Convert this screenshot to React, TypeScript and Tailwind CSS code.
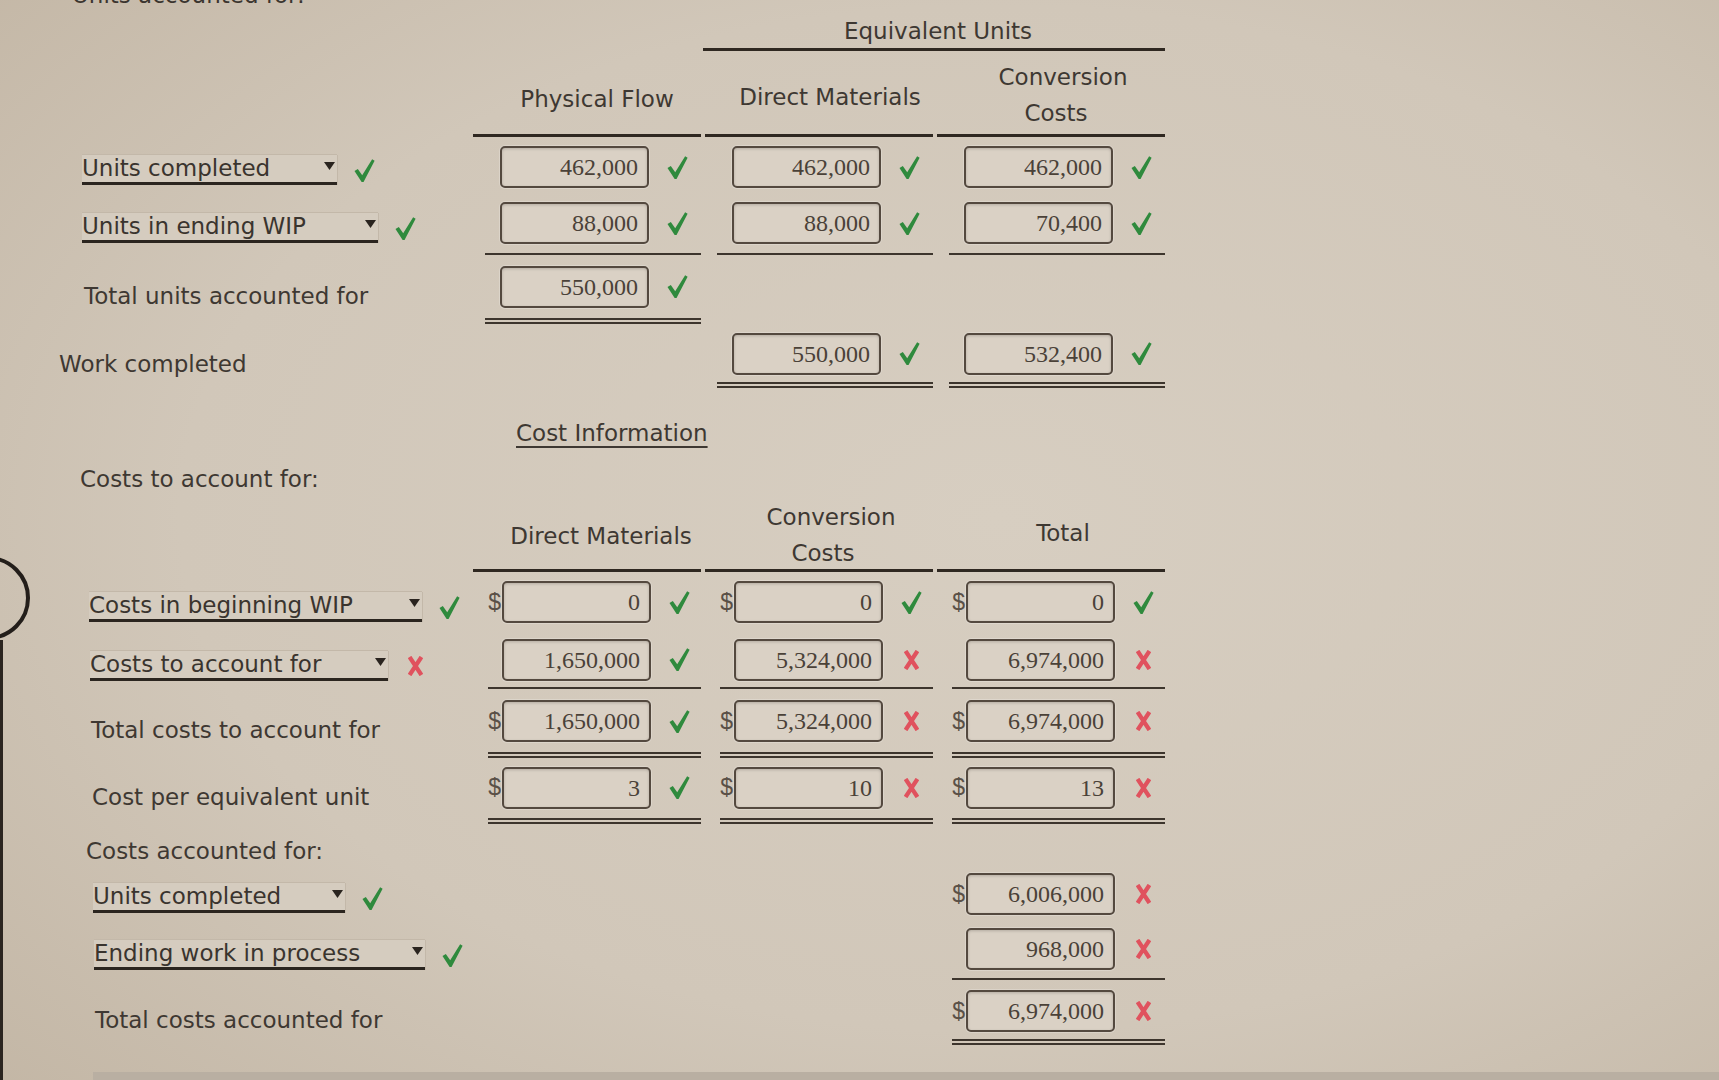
import React from 'react';

type Mark = 'c' | 'x';
type Cell = null | { v: string; d?: boolean; m: Mark };

const GRID = 'grid grid-cols-[469px_228px_228px_228px] gap-x-[4px]';

function Check() {
  return (
    <svg width="22" height="25" viewBox="0 0 22 25">
      <path d="M0.5 13 L4 11 L8.6 17.6 L19 0.6 L21.6 2.2 L10 24.6 L8 24.6 Z" fill="#2f8a3d" />
    </svg>
  );
}

function Cross() {
  return (
    <svg width="15" height="20" viewBox="0 0 15 20">
      <path d="M1.6 1 L13.4 19 M13.4 1 L1.6 19" stroke="#e0525e" strokeWidth="4.2" />
    </svg>
  );
}

function MarkView({ m }: { m: Mark }) {
  return <div className="flex w-[21px] justify-center">{m === 'c' ? <Check /> : <Cross />}</div>;
}

function CellView({ c, bottom }: { c: Cell; bottom?: boolean }) {
  if (!c) return <div />;
  return (
    <div className="flex items-center">
      <div
        className={
          (bottom ? 'w-[29px]' : 'w-[27px]') +
          " pr-[1px] text-right font-['Liberation_Sans',sans-serif] text-[23px] text-[#5a5047]"
        }
      >
        {c.d ? '$' : ''}
      </div>
      <div className="flex h-[42px] w-[149px] items-center justify-end rounded-[5px] border-2 border-[#54493f] bg-[#dad1c5] pr-[9px] font-['Liberation_Serif',serif] text-[24px] leading-none text-[#4a4138] shadow-[inset_0_1px_3px_rgba(0,0,0,0.18),0_0_0_1px_rgba(255,255,255,0.22)]">
        {c.v}
      </div>
      <div className="ml-[18px]">
        <MarkView m={c.m} />
      </div>
    </div>
  );
}

function DD({ text, w, m }: { text: string; w: string; m: Mark }) {
  return (
    <div className="flex items-center">
      <div
        className={
          w +
          ' flex h-[30px] items-center justify-between border-b-[3px] border-[#2b251f] bg-[#d5ccbf] shadow-[0_-1px_0_#c3b8a9,1px_0_0_#c3b8a9]'
        }
      >
        <span className="whitespace-nowrap leading-[27px] text-[#3a342e]">{text}</span>
        <svg width="11" height="8" viewBox="0 0 11 8" className="mb-[6px] mr-[2px]">
          <path d="M0 0 H11 L5.5 8 Z" fill="#2a241f" />
        </svg>
      </div>
      <div className="ml-[17px]">
        <MarkView m={m} />
      </div>
    </div>
  );
}

function Row({
  mt,
  label,
  cells,
  bottom,
}: {
  mt: string;
  label: React.ReactNode;
  cells: Cell[];
  bottom?: boolean;
}) {
  return (
    <div className={GRID + ' h-[42px] ' + mt}>
      {label}
      {cells.map((c, i) => (
        <CellView key={i} c={c} bottom={bottom} />
      ))}
    </div>
  );
}

type LineT = null | 's' | 'd' | 't';

function Lines({ mt, types, bottom }: { mt: string; types: LineT[]; bottom?: boolean }) {
  const ml = bottom ? 'ml-[15px]' : 'ml-[12px]';
  return (
    <div className={GRID + ' ' + mt}>
      <div />
      {types.map((t, i) => {
        if (!t) return <div key={i} />;
        if (t === 't') return <div key={i} className="h-[3px] bg-[#2f2821]" />;
        if (t === 's') return <div key={i} className={ml + ' h-[2px] bg-[#3d352d]'} />;
        return <div key={i} className={ml + ' h-[6px] border-y-2 border-[#3d352d]'} />;
      })}
    </div>
  );
}

export default function App() {
  return (
    <div className="relative h-[1080px] w-[1719px] overflow-hidden bg-[#cfc5b6] bg-[radial-gradient(ellipse_95%_95%_at_58%_48%,#d7cec1_0%,#d1c7b9_50%,#bcae9b_100%)] font-['DejaVu_Sans',sans-serif] text-[23px] text-[#3e3832]">
      {/* photo artefacts */}
      <div className="absolute left-[-54px] top-[556px] h-[84px] w-[84px] rounded-full border-[4px] border-[#231e1a]" />
      <div className="absolute bottom-0 left-0 top-[640px] w-[3px] bg-[#2b2520]" />

      <div className="mt-[-18px] h-[26px] pl-[72px] leading-[26px] text-[#3b352f]">Units accounted for:</div>

      {/* Equivalent units heading */}
      <div className={GRID + ' mt-[10px]'}>
        <div className="col-span-2 col-start-3 flex flex-col">
          <div className="h-[26px] pl-[6px] text-center leading-[26px]">Equivalent Units</div>
          <div className="-ml-[2px] mt-[4px] h-[3px] bg-[#2f2821]" />
        </div>
      </div>

      <div className={GRID + ' h-[83px]'}>
        <div />
        <div className="whitespace-nowrap pl-[20px] pt-[35px] text-center leading-[26px]">Physical Flow</div>
        <div className="whitespace-nowrap pl-[22px] pt-[33px] text-center leading-[26px]">Direct Materials</div>
        <div className="pl-[24px] pt-[8px] text-center leading-[36px]">
          Conversion
          <br />
          <span className="pr-[14px]">Costs</span>
        </div>
      </div>
      <Lines mt="" types={['t', 't', 't']} />

      <Row
        mt="mt-[9px]"
        label={
          <div className="pl-[82px] pt-[9px]">
            <DD text="Units completed" w="w-[255px]" m="c" />
          </div>
        }
        cells={[
          { v: '462,000', m: 'c' },
          { v: '462,000', m: 'c' },
          { v: '462,000', m: 'c' },
        ]}
      />
      <Row
        mt="mt-[14px]"
        label={
          <div className="pl-[82px] pt-[11px]">
            <DD text="Units in ending WIP" w="w-[296px]" m="c" />
          </div>
        }
        cells={[
          { v: '88,000', m: 'c' },
          { v: '88,000', m: 'c' },
          { v: '70,400', m: 'c' },
        ]}
      />
      <Lines mt="mt-[9px]" types={['s', 's', 's']} />
      <Row
        mt="mt-[9px]"
        label={<div className="whitespace-nowrap pl-[84px] pt-[19px] leading-[26px]">Total units accounted for</div>}
        cells={[{ v: '550,000', m: 'c' }, null, null]}
      />
      <Lines mt="mt-[12px]" types={['d', null, null]} />
      <Row
        mt="mt-[6px]"
        label={<div className="whitespace-nowrap pl-[59px] pt-[21px] leading-[26px]">Work completed</div>}
        cells={[null, { v: '550,000', m: 'c' }, { v: '532,400', m: 'c' }]}
      />
      <Lines mt="mt-[10px]" types={[null, 'd', 'd']} />

      {/* Cost information */}
      <div className={GRID + ' mt-[32px] h-[26px]'}>
        <div />
        <div className="whitespace-nowrap pl-[43px] leading-[26px] underline decoration-[2px] underline-offset-[5px]">
          Cost Information
        </div>
      </div>
      <div className="mt-[20px] h-[26px] pl-[80px] leading-[26px]">Costs to account for:</div>

      <div className={GRID + ' h-[77px]'}>
        <div />
        <div className="whitespace-nowrap pl-[28px] pt-[31px] text-center leading-[26px]">Direct Materials</div>
        <div className="pl-[24px] pt-[7px] text-center leading-[36px]">
          Conversion
          <br />
          <span className="pr-[16px]">Costs</span>
        </div>
        <div className="pl-[24px] pt-[28px] text-center leading-[26px]">Total</div>
      </div>
      <Lines mt="" types={['t', 't', 't']} />

      <Row
        bottom
        mt="mt-[9px]"
        label={
          <div className="pl-[89px] pt-[11px]">
            <DD text="Costs in beginning WIP" w="w-[333px]" m="c" />
          </div>
        }
        cells={[
          { v: '0', d: true, m: 'c' },
          { v: '0', d: true, m: 'c' },
          { v: '0', d: true, m: 'c' },
        ]}
      />
      <Row
        bottom
        mt="mt-[15px]"
        label={
          <div className="pl-[90px] pt-[13px]">
            <DD text="Costs to account for" w="w-[298px]" m="x" />
          </div>
        }
        cells={[
          { v: '1,650,000', m: 'c' },
          { v: '5,324,000', m: 'x' },
          { v: '6,974,000', m: 'x' },
        ]}
      />
      <Lines bottom mt="mt-[7px]" types={['s', 's', 's']} />
      <Row
        bottom
        mt="mt-[10px]"
        label={<div className="whitespace-nowrap pl-[91px] pt-[18px] leading-[26px]">Total costs to account for</div>}
        cells={[
          { v: '1,650,000', d: true, m: 'c' },
          { v: '5,324,000', d: true, m: 'x' },
          { v: '6,974,000', d: true, m: 'x' },
        ]}
      />
      <Lines bottom mt="mt-[11px]" types={['d', 'd', 'd']} />
      <Row
        bottom
        mt="mt-[7px]"
        label={<div className="whitespace-nowrap pl-[92px] pt-[19px] leading-[26px]">Cost per equivalent unit</div>}
        cells={[
          { v: '3', d: true, m: 'c' },
          { v: '10', d: true, m: 'x' },
          { v: '13', d: true, m: 'x' },
        ]}
      />
      <Lines bottom mt="mt-[11px]" types={['d', 'd', 'd']} />

      <div className="mt-[14px] h-[26px] pl-[86px] leading-[26px]">Costs accounted for:</div>

      <Row
        bottom
        mt="mt-[9px]"
        label={
          <div className="pl-[93px] pt-[10px]">
            <DD text="Units completed" w="w-[252px]" m="c" />
          </div>
        }
        cells={[null, null, { v: '6,006,000', d: true, m: 'x' }]}
      />
      <Row
        bottom
        mt="mt-[12px]"
        label={
          <div className="pl-[94px] pt-[13px]">
            <DD text="Ending work in process" w="w-[331px]" m="c" />
          </div>
        }
        cells={[null, null, { v: '968,000', m: 'x' }]}
      />
      <Lines bottom mt="mt-[9px]" types={[null, null, 's']} />
      <Row
        bottom
        mt="mt-[9px]"
        label={<div className="whitespace-nowrap pl-[95px] pt-[18px] leading-[26px]">Total costs accounted for</div>}
        cells={[null, null, { v: '6,974,000', d: true, m: 'x' }]}
      />
      <Lines bottom mt="mt-[8px]" types={[null, null, 'd']} />

      <div className="ml-[93px] mt-[27px] h-[12px] bg-[#b9afa2]" />
    </div>
  );
}
